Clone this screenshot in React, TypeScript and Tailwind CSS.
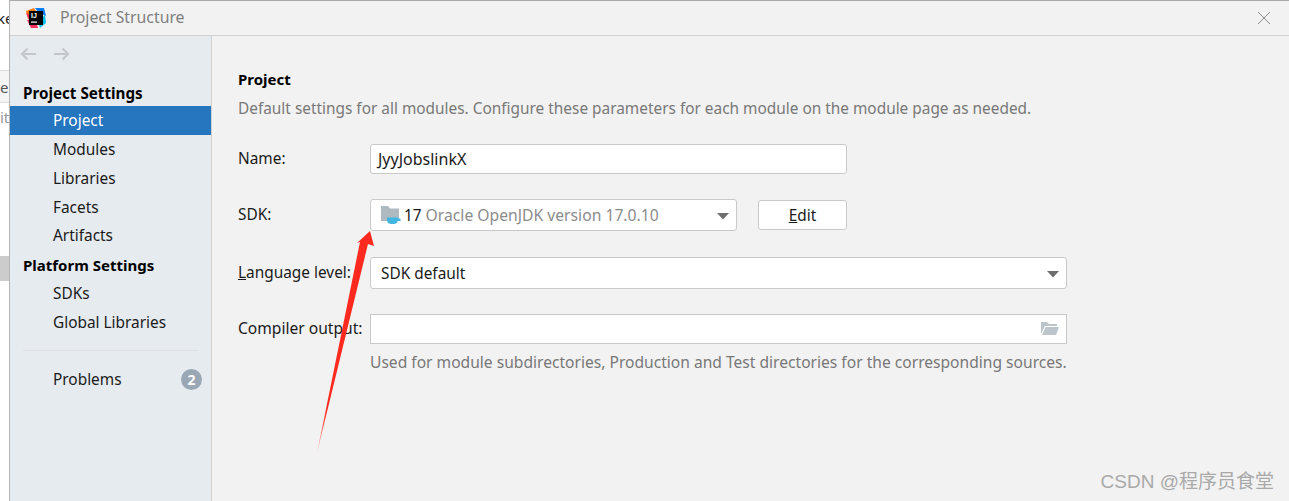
import React from 'react';

function Logo() {
	return (
		<svg width="22" height="22" viewBox="0 0 22 22" className="shrink-0">
			<path d="M1 4 L9 1 L12 6 L3 12 Z" fill="#f97a12" />
			<path d="M1 6 L7 20 L13 21 L5 8 Z" fill="#fe2857" />
			<path d="M2 13 L6 21 L13 21 L10 12 Z" fill="#fe315d" />
			<path d="M10 1 L19 1 L21 9 L14 6 Z" fill="#087cfa" />
			<path d="M13 14 L20 8 L21 16 L15 21 Z" fill="#07c3f2" />
			<rect x="4" y="4" width="14" height="14" fill="#000" />
			<text x="6" y="11" fontSize="7" fontWeight="700" fill="#fff" fontFamily="'Liberation Sans', sans-serif">IJ</text>
			<rect x="6" y="14.5" width="6" height="1.2" fill="#fff" />
		</svg>
	);
}

function Caret() {
	return (
		<svg width="12" height="8" viewBox="0 0 12 8" className="shrink-0">
			<path d="M0 1 H12 L6 7.5 Z" fill="#6e6e6e" />
		</svg>
	);
}

function SdkIcon() {
	return (
		<svg width="20" height="19" viewBox="0 0 20 19" className="shrink-0">
			<path d="M0 0 H7 L9 2.5 H18 V15 H0 Z" fill="#aeb9c0" />
			<path d="M6 11.5 H17 V14 C17 16.5 15 18 12.5 18 H10.5 C8 18 6 16.5 6 14 Z" fill="#40b6e0" />
			<path d="M17 12.5 H19.5 V15 H16.5 Z" fill="#40b6e0" />
		</svg>
	);
}

function OpenFolder() {
	return (
		<svg width="20" height="16" viewBox="0 0 20 16">
			<path d="M1 1 H7 L9 3 H17 V5 H5 L1 13 Z" fill="#bcc5ca" />
			<path d="M5.5 6 H19 L16 14 H2 Z" fill="#bcc5ca" />
		</svg>
	);
}

function NavItem({ label, active, short }: { label: string; active?: boolean; short?: boolean }) {
	return (
		<div className={`${short ? 'h-[28px]' : 'h-[29px]'} pl-[43px] flex items-center text-[15.4px] ${active ? 'bg-[#2675bf] text-white' : 'text-[#1a1a1a]'}`}>{label}</div>
	);
}

export default function App() {
	return (
		<div className="relative w-[1289px] h-[501px] overflow-hidden flex bg-[#f2f2f2] text-[#1a1a1a] font-['Noto_Sans','Open_Sans',sans-serif]">
			{/* window behind the dialog */}
			<div className="w-[10px] shrink-0 bg-white border-r border-[#b5b5b5] overflow-hidden flex flex-col text-[15px] text-[#555]">
				<div className="h-[71px] border-b border-[#dcdcdc] pt-[7px] -ml-[3px] text-[#222] whitespace-nowrap">ke</div>
				<div className="h-[32px] bg-[#f5f5f5] border-b border-[#dcdcdc] pt-[5px] whitespace-nowrap">e</div>
				<div className="h-[153px] pt-[3px] whitespace-nowrap text-[#999]">it</div>
				<div className="h-[25px] bg-[#cccccc] shrink-0"></div>
			</div>

			<div className="flex-1 min-w-0 flex flex-col border-t border-[#a9a9a9]">
				{/* title bar */}
				<div className="h-[35px] shrink-0 border-b border-[#d1d1d1] flex items-center pl-[15px] pr-[18px]">
					<Logo />
					<span className="ml-[13px] text-[15.8px] text-[#7f7f7f]">Project Structure</span>
					<svg width="14" height="14" viewBox="0 0 14 14" className="ml-auto">
						<path d="M1 1 L13 13 M13 1 L1 13" stroke="#8c8c8c" strokeWidth="1" />
					</svg>
				</div>

				<div className="flex-1 flex min-h-0">
					{/* sidebar */}
					<div className="w-[202px] shrink-0 bg-[#e6ebf0] border-r border-[#d1d1d1] flex flex-col">
						<div className="h-[34px] pl-[10px] flex items-center gap-[16px] pt-[2px] shrink-0">
							<svg width="17" height="14" viewBox="0 0 17 14">
								<path d="M16 7 H2 M7.5 1.5 L2 7 L7.5 12.5" stroke="#c4c7ca" strokeWidth="2" fill="none" />
							</svg>
							<svg width="17" height="14" viewBox="0 0 17 14">
								<path d="M1 7 H15 M9.5 1.5 L15 7 L9.5 12.5" stroke="#c4c7ca" strokeWidth="2" fill="none" />
							</svg>
						</div>
						<div className="h-[36px] pl-[13px] flex items-center text-[15.2px] font-bold pt-[10px] shrink-0 text-black">Project Settings</div>
						<NavItem label="Project" active />
						<NavItem label="Modules" />
						<NavItem label="Libraries" />
						<NavItem label="Facets" />
						<NavItem label="Artifacts" short />
						<div className="h-[29px] pl-[13px] pt-[1px] flex items-center text-[15px] font-bold text-black">Platform Settings</div>
						<NavItem label="SDKs" />
						<NavItem label="Global Libraries" />
						<div className="mx-[13px] mt-[13px] border-t border-[#dfe0e2]"></div>
						<div className="h-[29px] mt-[14px] pl-[43px] pr-[9px] flex items-center justify-between text-[15.4px]">
							<span>Problems</span>
							<span className="w-[21px] h-[21px] rounded-full bg-[#9aa7b4] text-white font-bold text-[14px] flex items-center justify-center">2</span>
						</div>
					</div>

					{/* form */}
					<div className="flex-1 min-w-0 pl-[26px] pt-[33px] text-[15.4px]">
						<div className="font-bold text-[15px] h-[21px] leading-[21px] text-black">Project</div>
						<div className="mt-[8px] h-[21px] leading-[21px] text-[#787878] whitespace-nowrap">Default settings for all modules. Configure these parameters for each module on the module page as needed.</div>

						<div className="mt-[25px] flex items-center h-[30px]">
							<span className="w-[132px] shrink-0">Name:</span>
							<div className="w-[477px] h-[30px] bg-white border border-[#c9c9c9] rounded-[3px] pl-[7px] flex items-center text-[16px]">JyyJobslinkX</div>
						</div>

						<div className="mt-[25px] flex items-center h-[32px]">
							<span className="w-[132px] shrink-0">SDK:</span>
							<div className="w-[367px] h-[32px] bg-white border border-[#c9c9c9] rounded-[3px] pl-[10px] pr-[7px] pt-[1px] flex items-center">
								<SdkIcon />
								<span className="ml-[3px]">17</span>
								<span className="ml-[4px] text-[#8c8c8c] text-[15.7px]">Oracle OpenJDK version 17.0.10</span>
								<span className="ml-auto"><Caret /></span>
							</div>
							<div className="ml-[21px] w-[89px] h-[30px] pt-[1px] bg-white border border-[#c9c9c9] rounded-[3px] flex items-center justify-center">
								<span><span className="underline">E</span>dit</span>
							</div>
						</div>

						<div className="mt-[26px] flex items-center h-[32px]">
							<span className="w-[132px] shrink-0 whitespace-nowrap"><span className="underline">L</span>anguage level:</span>
							<div className="w-[697px] h-[32px] bg-white border border-[#c9c9c9] rounded-[3px] pl-[10px] pr-[7px] pt-[1px] flex items-center justify-between">
								<span>SDK default</span>
								<Caret />
							</div>
						</div>

						<div className="mt-[25px] flex items-center h-[30px]">
							<span className="w-[132px] shrink-0 whitespace-nowrap text-[15.6px]">Compiler output:</span>
							<div className="w-[697px] h-[30px] bg-white border border-[#c9c9c9] pr-[6px] flex items-center justify-end">
								<OpenFolder />
							</div>
						</div>

						<div className="mt-[8px] ml-[132px] h-[21px] leading-[21px] text-[#787878] whitespace-nowrap text-[15.6px]">Used for module subdirectories, Production and Test directories for the corresponding sources.</div>
					</div>
				</div>
			</div>

			{/* annotation arrow */}
			<svg width="80" height="240" viewBox="0 0 80 240" className="absolute left-[300px] top-[220px]">
				<defs>
					<linearGradient id="arrowFade" x1="0" y1="1" x2="0" y2="0">
						<stop offset="0" stopColor="#ff2a1f" stopOpacity="0.35" />
						<stop offset="0.2" stopColor="#ff2a1f" />
						<stop offset="1" stopColor="#ff2a1f" />
					</linearGradient>
				</defs>
				<path d="M70 11 L74 26 L68 24 L17 233 L60 22 L57 23 Z" fill="url(#arrowFade)" />
			</svg>

			{/* watermark */}
			<div className="absolute right-[15px] top-[470px] text-[19px] leading-[24px] text-[#a9a9a9] font-['Liberation_Sans','Noto_Sans_CJK_SC',sans-serif]">CSDN @程序员食堂</div>
		</div>
	);
}
